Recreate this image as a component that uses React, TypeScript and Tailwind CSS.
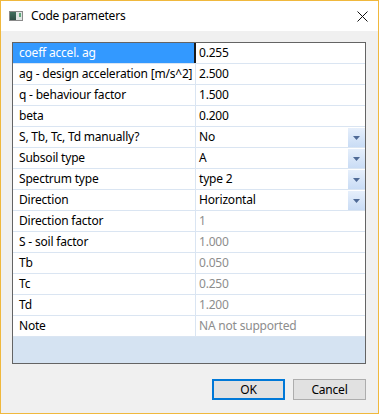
import React from "react";

type Row = { label: string; value: string; kind: "sel" | "edit" | "drop" | "ro" };

const rows: Row[] = [
  { label: "coeff accel. ag", value: "0.255", kind: "sel" },
  { label: "ag - design acceleration [m/s^2]", value: "2.500", kind: "edit" },
  { label: "q - behaviour factor", value: "1.500", kind: "edit" },
  { label: "beta", value: "0.200", kind: "edit" },
  { label: "S, Tb, Tc, Td manually?", value: "No", kind: "drop" },
  { label: "Subsoil type", value: "A", kind: "drop" },
  { label: "Spectrum type", value: "type 2", kind: "drop" },
  { label: "Direction", value: "Horizontal", kind: "drop" },
  { label: "Direction factor", value: "1", kind: "ro" },
  { label: "S - soil factor", value: "1.000", kind: "ro" },
  { label: "Tb", value: "0.050", kind: "ro" },
  { label: "Tc", value: "0.250", kind: "ro" },
  { label: "Td", value: "1.200", kind: "ro" },
  { label: "Note", value: "NA not supported", kind: "ro" },
];

function DropBtn() {
  return (
    <div className="absolute right-0 top-[1px] w-[17px] h-[19px] bg-gradient-to-b from-[#e6effb] to-[#c9dcf5] flex items-center justify-center">
      <svg width="7" height="4" viewBox="0 0 7 4">
        <path d="M0 0 H7 L3.5 4 Z" fill="#4f6a96" />
      </svg>
    </div>
  );
}

export default function App() {
  return (
    <div
      className="w-[379px] h-[414px] border border-[#f0b83d] bg-[#f0f0f0] flex flex-col text-[12px] tracking-[-0.2px] text-black overflow-hidden"
      style={{ fontFamily: '"Segoe UI", "Noto Sans", "Liberation Sans", sans-serif' }}
    >
      {/* Title bar */}
      <div className="h-[30px] bg-white flex items-center shrink-0">
        <div className="ml-[8px] w-[14px] h-[10px] border border-[#8a8a8a] flex">
          <div className="w-[6px] h-full bg-gradient-to-b from-[#3f6f5e] to-[#2e4e45]" />
          <div className="flex-1 bg-[#dfe6e4] flex items-start justify-end">
            <div className="w-[2px] h-[4px] bg-[#5ea67a] mt-[1px] mr-[1px]" />
          </div>
        </div>
        <span className="ml-[8px] text-[12px] leading-none">Code parameters</span>
        <div className="ml-auto mr-[10px] w-[12px] h-[12px] flex items-center justify-center">
          <svg width="11" height="11" viewBox="0 0 11 11">
            <path d="M0.5 0.5 L10.5 10.5 M10.5 0.5 L0.5 10.5" stroke="#111" strokeWidth="1" />
          </svg>
        </div>
      </div>

      {/* Body */}
      <div className="flex-1 flex flex-col pl-[11px] pr-[12px] pt-[11px]">
        <div className="w-[354px] h-[322px] border border-[#646464] bg-[#d5e3f2] flex flex-col">
          {rows.map((r, i) => (
            <div key={i} className="h-[21px] flex bg-white border-b border-[#dae5f2] shrink-0">
              <div
                className={
                  "w-[183px] shrink-0 border-r border-[#dae5f2] flex items-center pl-[6px] overflow-hidden whitespace-nowrap " +
                  (r.kind === "sel" ? "bg-[#3399ff] text-white border-r-2 border-r-[#1a1a1a]" : "")
                }
              >
                {r.label}
              </div>
              <div
                className={
                  "relative flex-1 flex items-center pl-[3px] whitespace-nowrap " +
                  (r.kind === "ro" ? "text-[#8d8d8d]" : "text-black")
                }
              >
                {r.value}
                {r.kind === "drop" && <DropBtn />}
              </div>
            </div>
          ))}
        </div>

        <div className="flex justify-end gap-[8px] mt-[15px]">
          <button className="w-[73px] h-[21px] border-2 border-[#0078d7] bg-[#e1e1e1] text-[12px] flex items-center justify-center">
            OK
          </button>
          <button className="w-[73px] h-[21px] border border-[#adadad] bg-[#e1e1e1] text-[12px] flex items-center justify-center">
            Cancel
          </button>
        </div>
      </div>
    </div>
  );
}
